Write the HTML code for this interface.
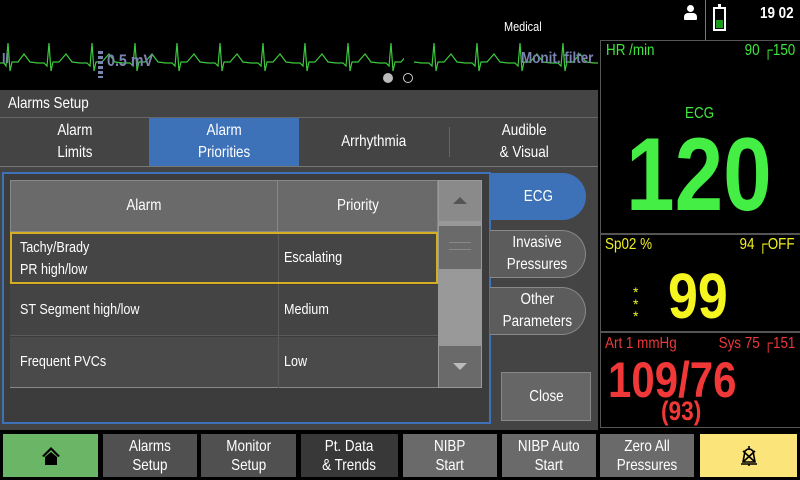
<!DOCTYPE html>
<html><head><meta charset="utf-8"><style>
*{margin:0;padding:0;box-sizing:border-box}
body{width:800px;height:480px;background:#000;overflow:hidden;position:relative;font-family:"Liberation Sans",sans-serif;color:#fff}
.a{position:absolute;white-space:nowrap}
.t{transform:scaleX(.84);transform-origin:0 0}
.r{transform:scaleX(.84);transform-origin:100% 0}
.c{display:flex;align-items:center;justify-content:center;text-align:center;line-height:1.35}
.c span{display:inline-block;transform:scaleX(.84);white-space:nowrap}
</style></head><body>
<!-- top -->
<div class="a t" style="left:504px;top:19px;font-size:13px">Medical</div>
<div class="a" style="left:683px;top:5px;width:14px;height:16px">
<div class="a" style="left:4px;top:0;width:7px;height:7px;border-radius:50%;background:#fff"></div>
<div class="a" style="left:1px;top:8px;width:13px;height:7px;border-radius:4px 4px 1px 1px;background:#fff"></div></div>
<div class="a" style="left:705px;top:0;width:1px;height:40px;background:#777"></div>
<div class="a" style="left:718px;top:4px;width:3px;height:3px;background:#fff"></div>
<div class="a" style="left:713px;top:7px;width:13px;height:24px;border:2px solid #fff"><div class="a" style="left:1px;bottom:1px;width:7px;height:8px;background:#1a9a1a"></div></div>
<div class="a t" style="left:760px;top:5px;font-size:16px;font-weight:bold">19 02</div>
<!-- waveform -->
<svg class="a" style="left:0;top:38px" width="598" height="50">
<polyline fill="none" stroke="#3ec83e" stroke-width="1.2" points="
0,25 4,25 6,28 8,5 10,33 12,24 18,24 24,16 30,24 38,25 44,25 47,28 49,5 51,33 53,24 59,24 66,16 72,24 80,25 87,25 90,28 92,5 94,33 96,24 102,24 109,16 115,24 123,25 130,25 133,28 135,5 137,33 139,24 145,24 152,16 158,24 166,25 172,25 175,28 177,5 179,33 181,24 187,24 194,16 200,24 208,25 215,25 218,28 220,5 222,33 224,24 230,24 237,16 243,24 251,25 258,25 261,28 263,5 265,33 267,24 273,24 280,16 286,24 294,25 300,25 303,28 305,5 307,33 309,24 315,24 322,16 328,24 336,25 343,25 346,28 348,5 350,33 352,24 358,24 365,16 371,24 379,25 386,25 389,28 391,5 393,33 395,24 401,24 408,16 414,24 422,25 429,25 432,28 434,5 436,33 438,24 444,24 451,16 457,24 465,25 472,25 475,28 477,5 479,33 481,24 487,24 494,16 500,24 508,25 515,25 518,28 520,5 522,33 524,24 530,24 537,16 543,24 551,25 558,25 561,28 563,5 565,33 567,24 573,24 580,16 586,24 594,25 598,25"/>
</svg>
<div class="a" style="left:404px;top:48px;width:10px;height:30px;background:#000"></div>
<div class="a t" style="left:2px;top:50px;font-size:15px;color:#7a84b0;font-weight:bold">II</div>
<div class="a" style="left:98px;top:51px;width:5px;height:27px;background:repeating-linear-gradient(#7a84b0 0 3px,transparent 3px 5px)"></div>
<div class="a t" style="left:107px;top:51px;font-size:17px;color:#7a84b0;font-weight:bold">0.5 mV</div>
<div class="a t" style="left:521px;top:50px;font-size:16px;color:#7a84b0;font-weight:bold">Monit. filter</div>
<div class="a" style="left:383px;top:73px;width:10px;height:10px;border-radius:50%;background:#bbb"></div>
<div class="a" style="left:403px;top:73px;width:10px;height:10px;border-radius:50%;border:1.5px solid #ccc"></div>
<!-- alarms panel -->
<div class="a" style="left:0;top:90px;width:598px;height:340px;background:#444"></div>
<div class="a t" style="left:8px;top:95px;font-size:16px">Alarms Setup</div>
<div class="a" style="left:0;top:117px;width:598px;height:1px;background:#666"></div>
<div class="a" style="left:0;top:166px;width:598px;height:1px;background:#777"></div>
<div class="a c" style="left:0;top:118px;width:149px;height:48px;font-size:16px"><span>Alarm<br>Limits</span></div>
<div class="a c" style="left:149px;top:118px;width:150px;height:48px;font-size:16px;background:#3d72b8"><span>Alarm<br>Priorities</span></div>
<div class="a c" style="left:299px;top:118px;width:150px;height:48px;font-size:16px"><span>Arrhythmia</span></div>
<div class="a" style="left:449px;top:127px;width:1px;height:30px;background:#666"></div>
<div class="a c" style="left:450px;top:118px;width:148px;height:48px;font-size:16px"><span>Audible<br>&amp; Visual</span></div>
<div class="a" style="left:2px;top:172px;width:489px;height:252px;border:2px solid #3d72b8;background:#3c3c3c"></div>
<!-- table -->
<div class="a c" style="left:10px;top:180px;width:268px;height:52px;background:#6a6a6a;font-size:16px;border:1px solid #888"><span>Alarm</span></div>
<div class="a c" style="left:278px;top:180px;width:160px;height:52px;background:#6a6a6a;font-size:16px;border:1px solid #888;border-left:none"><span>Priority</span></div>
<div class="a" style="left:10px;top:232px;width:428px;height:52px;background:#454545"></div>
<div class="a t" style="left:20px;top:237px;font-size:15px;line-height:22px">Tachy/Brady<br>PR high/low</div>
<div class="a t" style="left:284px;top:249px;font-size:15px">Escalating</div>
<div class="a" style="left:10px;top:285px;width:428px;height:51px;background:#444;border-bottom:1px solid #5a5a5a"></div>
<div class="a t" style="left:20px;top:301px;font-size:15px">ST Segment high/low</div>
<div class="a t" style="left:284px;top:301px;font-size:15px">Medium</div>
<div class="a" style="left:10px;top:337px;width:428px;height:51px;background:#4a4a4a;border-bottom:1px solid #888"></div>
<div class="a t" style="left:20px;top:353px;font-size:15px">Frequent PVCs</div>
<div class="a t" style="left:284px;top:353px;font-size:15px">Low</div>
<div class="a" style="left:278px;top:232px;width:1px;height:156px;background:#5a5a5a"></div>
<div class="a" style="left:10px;top:232px;width:428px;height:52px;border:2px solid #d4b020"></div>
<!-- scrollbar -->
<div class="a" style="left:438px;top:180px;width:44px;height:208px;background:#999"></div>
<div class="a" style="left:439px;top:181px;width:42px;height:40px;background:#8a8a8a"></div>
<div class="a" style="left:453px;top:197px;border-left:7px solid transparent;border-right:7px solid transparent;border-bottom:7px solid #555"></div>
<div class="a" style="left:439px;top:226px;width:42px;height:43px;background:#6a6a6a"></div>
<div class="a" style="left:449px;top:242px;width:22px;height:8px;border-top:1px solid #888;border-bottom:1px solid #888"></div>
<div class="a" style="left:439px;top:346px;width:42px;height:41px;background:#6a6a6a"></div>
<div class="a" style="left:453px;top:363px;border-left:7px solid transparent;border-right:7px solid transparent;border-top:7px solid #bbb"></div>
<!-- side buttons -->
<div class="a c" style="left:490px;top:173px;width:96px;height:47px;background:#3d72b8;border-radius:0 24px 24px 0;font-size:16px"><span>ECG</span></div>
<div class="a c" style="left:490px;top:230px;width:96px;height:48px;background:#5c5c5c;border:1px solid #888;border-left:none;border-radius:0 24px 24px 0;font-size:16px"><span>Invasive<br>Pressures</span></div>
<div class="a c" style="left:490px;top:287px;width:96px;height:48px;background:#5c5c5c;border:1px solid #888;border-left:none;border-radius:0 24px 24px 0;font-size:16px"><span>Other<br>Parameters</span></div>
<div class="a c" style="left:501px;top:372px;width:90px;height:49px;background:#666;border:1px solid #888;font-size:16px"><span>Close</span></div>
<!-- right parameter boxes -->
<div class="a" style="left:600px;top:40px;width:200px;height:194px;border:1px solid #555;border-right:none"></div>
<div class="a t" style="left:606px;top:42px;font-size:16px;color:#3ee83e">HR /min</div>
<div class="a r" style="right:5px;top:42px;font-size:16px;color:#3ee83e">90 &#x250C;150</div>
<div class="a t" style="left:685px;top:105px;font-size:16px;color:#3ee83e">ECG</div>
<div class="a t" style="left:626px;top:123px;font-size:104px;font-weight:bold;color:#44ee44;line-height:1">120</div>
<div class="a" style="left:600px;top:234px;width:200px;height:98px;border:1px solid #555;border-right:none"></div>
<div class="a t" style="left:605px;top:236px;font-size:16px;color:#f0f020">Sp02 %</div>
<div class="a r" style="right:5px;top:236px;font-size:16px;color:#f0f020">94 &#x250C;OFF</div>
<div class="a" style="left:633px;top:286px;font-size:14px;line-height:12px;color:#f0f020">*<br>*<br>*</div>
<div class="a t" style="left:668px;top:264px;font-size:64px;font-weight:bold;color:#f5f520;line-height:1">99</div>
<div class="a" style="left:600px;top:332px;width:200px;height:96px;border:1px solid #555;border-right:none"></div>
<div class="a t" style="left:605px;top:335px;font-size:16px;color:#ee3838">Art 1 mmHg</div>
<div class="a r" style="right:5px;top:335px;font-size:16px;color:#ee3838">Sys 75 &#x250C;151</div>
<div class="a t" style="left:608px;top:355px;font-size:50px;font-weight:bold;color:#f03838;line-height:1">109/76</div>
<div class="a t" style="left:661px;top:398px;font-size:27px;font-weight:bold;color:#f03838;line-height:1">(93)</div>
<!-- bottom bar -->
<div class="a c" style="left:3px;top:434px;width:95px;height:43px;background:#6bb567">
<svg width="20" height="20" viewBox="0 0 20 20"><path d="M10 1 L1 10 L3 11 L10 4 L17 11 L19 10 Z M4 11 L10 6 L16 11 L16 19 L4 19 Z" fill="#000"/></svg></div>
<div class="a c" style="left:103px;top:434px;width:94px;height:43px;background:#505050;font-size:16px;line-height:19px"><span>Alarms<br>Setup</span></div>
<div class="a c" style="left:201px;top:434px;width:95px;height:43px;background:#505050;font-size:16px;line-height:19px"><span>Monitor<br>Setup</span></div>
<div class="a c" style="left:301px;top:434px;width:97px;height:43px;background:#383838;font-size:16px;line-height:19px"><span>Pt. Data<br>&amp; Trends</span></div>
<div class="a c" style="left:403px;top:434px;width:94px;height:43px;background:#6a6a6a;font-size:16px;line-height:19px"><span>NIBP<br>Start</span></div>
<div class="a c" style="left:502px;top:434px;width:94px;height:43px;background:#6a6a6a;font-size:16px;line-height:19px"><span>NIBP Auto<br>Start</span></div>
<div class="a c" style="left:600px;top:434px;width:94px;height:43px;background:#6a6a6a;font-size:16px;line-height:19px"><span>Zero All<br>Pressures</span></div>
<div class="a c" style="left:700px;top:434px;width:97px;height:43px;background:#fbe57a">
<svg width="22" height="24" viewBox="0 0 22 24" fill="none" stroke="#000" stroke-width="1.6"><path d="M11 2 L11 5 M7 7 Q11 3 15 7 L17 18 L5 18 Z M3 20 L19 20 M10 21 L12 21 M5 7 L17 18 M17 7 L5 18"/></svg></div>
</body></html>
